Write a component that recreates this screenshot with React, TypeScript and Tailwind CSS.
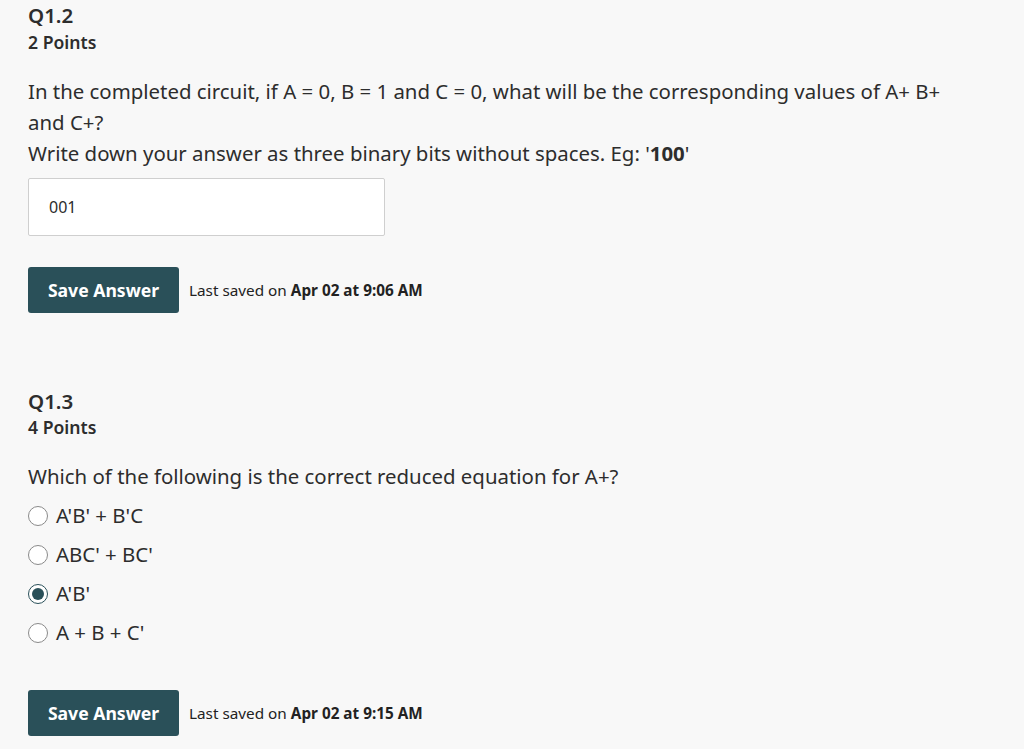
import React, { useState } from 'react';

const font = { fontFamily: "'Noto Sans', 'Open Sans', sans-serif" };

function SaveRow({ time }: { time: string }) {
  return (
    <div className="flex items-center gap-[10px]">
      <button className="h-[46px] w-[151px] rounded-[3px] bg-[#2a5059] text-[17.6px] font-bold text-white">
        Save Answer
      </button>
      <span className="text-[15.3px] text-[#222]">
        Last saved on <b className="font-bold">{time}</b>
      </span>
    </div>
  );
}

function Radio({ label, checked, onClick }: { label: string; checked: boolean; onClick: () => void }) {
  return (
    <label className="flex h-[39px] cursor-pointer items-center gap-[8px]" onClick={onClick}>
      <span
        className={
          checked
            ? 'flex h-[20px] w-[20px] items-center justify-center rounded-full border-[1.5px] border-[#2a5059] bg-white'
            : 'flex h-[20px] w-[20px] items-center justify-center rounded-full border-[1.5px] border-[#8a8a8a] bg-white'
        }
      >
        {checked && <span className="h-[12px] w-[12px] rounded-full bg-[#2a5059]" />}
      </span>
      <span className="text-[20.4px] text-[#2d2d2d]">{label}</span>
    </label>
  );
}

export default function App() {
  const [choice, setChoice] = useState(2);
  const options = ["A'B' + B'C", "ABC' + BC'", "A'B'", "A + B + C'"];

  return (
    <div className="min-h-[749px] w-full bg-[#f8f8f8] pl-[28px] text-[#2d2d2d]" style={font}>
      {/* Q1.2 */}
      <div className="pt-[2px]">
        <div className="text-[20.5px] font-semibold leading-[26px]">Q1.2</div>
        <div className="mt-[2px] text-[17.6px] font-semibold leading-[24px]">2 Points</div>
      </div>
      <div className="mt-[22px] w-[935px] text-[20.4px] leading-[31px]">
        In the completed circuit, if A = 0, B = 1 and C = 0, what will be the corresponding values of A+ B+ and C+?
      </div>
      <div className="text-[20.4px] leading-[31px]">
        Write down your answer as three binary bits without spaces. Eg: '<b className="font-bold">100</b>'
      </div>
      <div className="mt-[9px] flex h-[58px] w-[357px] items-center rounded-[2px] border border-[#cfcfcf] bg-white px-[20px] text-[16px]">
        001
      </div>
      <div className="mt-[31px]">
        <SaveRow time="Apr 02 at 9:06 AM" />
      </div>

      {/* Q1.3 */}
      <div className="mt-[75px]">
        <div className="text-[20.5px] font-semibold leading-[26px]">Q1.3</div>
        <div className="mt-[1px] text-[17.6px] font-semibold leading-[24px]">4 Points</div>
      </div>
      <div className="mt-[22px] text-[20.4px] leading-[31px]">
        Which of the following is the correct reduced equation for A+?
      </div>
      <div className="mt-[4px] flex flex-col">
        {options.map((o, i) => (
          <Radio key={o} label={o} checked={choice === i} onClick={() => setChoice(i)} />
        ))}
      </div>
      <div className="mt-[38px]">
        <SaveRow time="Apr 02 at 9:15 AM" />
      </div>
    </div>
  );
}
